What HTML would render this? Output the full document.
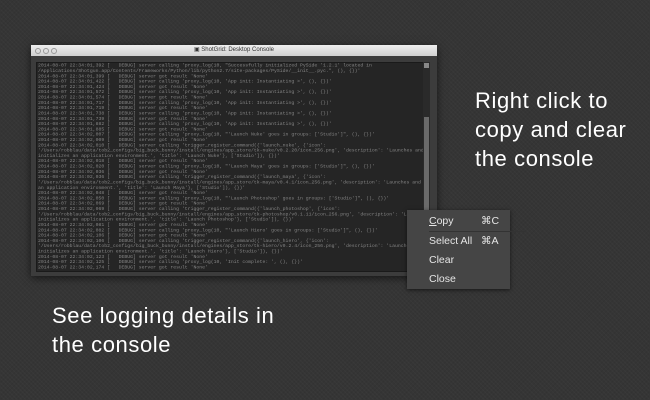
<!DOCTYPE html>
<html><head><meta charset="utf-8"><style>
body{margin:0;width:650px;height:400px;overflow:hidden;background:#353535;font-family:"Liberation Sans",sans-serif;position:relative}
.bg{position:absolute;inset:0;background:repeating-linear-gradient(45deg,rgba(255,255,255,0.02) 0 1px,transparent 1px 3px),repeating-linear-gradient(-45deg,rgba(0,0,0,0.05) 0 1px,transparent 1px 3px)}
.win{position:absolute;left:31px;top:45px;width:406px;height:231px;background:#3c3c3c;box-shadow:0 2px 8px rgba(0,0,0,.6)}
.title{height:11px;background:linear-gradient(#eee,#d0d0d0);font-size:6px;color:#333;text-align:center;line-height:11px;position:relative}
.dots{position:absolute;left:4px;top:3px}
.dots i{display:inline-block;width:4px;height:4px;border:1px solid #999;border-radius:50%;margin-right:2px}
.con{position:absolute;left:5px;top:17px;width:387px;height:208px;background:#252525;overflow:hidden;border:1px solid #1a1a1a}
.con pre{margin:1px 0 0 1px;font-family:"Liberation Mono",monospace;font-size:4.8px;line-height:6px;color:#858585;transform:scale(1,0.885);transform-origin:0 0}
.sb{position:absolute;left:392px;top:17px;width:7px;height:209px;background:#2a2a2a}
.sb .th{position:absolute;left:1px;top:55px;width:5px;height:154px;background:#6a6a6a}
.sb .up{position:absolute;left:1px;top:1px;width:5px;height:5px;background:#888}
.menu{position:absolute;left:407px;top:210px;width:103px;height:79px;background:#454545;box-shadow:0 1px 4px rgba(0,0,0,.6);color:#e6e6e6;font-size:10.5px}
.menu div{position:absolute;left:22px}
.menu span{position:absolute;left:74px}
.sep{position:absolute;left:4px;top:21px;width:96px;height:1px;background:#333}
.txt{position:absolute;color:#fff;font-size:22px;letter-spacing:0.6px;line-height:29px}
</style></head><body><div class="bg"></div>
<div class="win"><div class="title"><span class="dots"><i></i><i></i><i></i></span>▣ ShotGrid: Desktop Console</div>
<div class="con"><pre>2014-08-07 22:34:01,392 [   DEBUG] server calling 'proxy_log(10, "Successfully initialized PySide '1.2.1' located in
/Applications/Shotgun.app/Contents/Frameworks/Python/lib/python2.7/site-packages/PySide/__init__.pyc.", (), {})'
2014-08-07 22:34:01,399 [   DEBUG] server got result 'None'
2014-08-07 22:34:01,422 [   DEBUG] server calling 'proxy_log(10, 'App init: Instantiating >', (), {})'
2014-08-07 22:34:01,424 [   DEBUG] server got result 'None'
2014-08-07 22:34:01,572 [   DEBUG] server calling 'proxy_log(10, 'App init: Instantiating >', (), {})'
2014-08-07 22:34:01,574 [   DEBUG] server got result 'None'
2014-08-07 22:34:01,717 [   DEBUG] server calling 'proxy_log(10, 'App init: Instantiating >', (), {})'
2014-08-07 22:34:01,719 [   DEBUG] server got result 'None'
2014-08-07 22:34:01,738 [   DEBUG] server calling 'proxy_log(10, 'App init: Instantiating >', (), {})'
2014-08-07 22:34:01,739 [   DEBUG] server got result 'None'
2014-08-07 22:34:01,882 [   DEBUG] server calling 'proxy_log(10, 'App init: Instantiating >', (), {})'
2014-08-07 22:34:01,885 [   DEBUG] server got result 'None'
2014-08-07 22:34:02,007 [   DEBUG] server calling 'proxy_log(10, "'Launch Nuke' goes in groups: ['Studio']", (), {})'
2014-08-07 22:34:02,009 [   DEBUG] server got result 'None'
2014-08-07 22:34:02,010 [   DEBUG] server calling 'trigger_register_command({'launch_nuke', {'icon':
'/Users/robblau/data/tob2_configs/big_buck_bunny/install/engines/app_store/tk-nuke/v0.2.20/icon_256.png', 'description': 'Launches and
initializes an application environment.', 'title': 'Launch Nuke'}, ['Studio']), {})'
2014-08-07 22:34:02,018 [   DEBUG] server got result 'None'
2014-08-07 22:34:02,020 [   DEBUG] server calling 'proxy_log(10, "'Launch Maya' goes in groups: ['Studio']", (), {})'
2014-08-07 22:34:02,036 [   DEBUG] server got result 'None'
2014-08-07 22:34:02,036 [   DEBUG] server calling 'trigger_register_command({'launch_maya', {'icon':
'/Users/robblau/data/tob2_configs/big_buck_bunny/install/engines/app_store/tk-maya/v0.4.1/icon_256.png', 'description': 'Launches and initializes
an application environment.', 'title': 'Launch Maya'}, ['Studio']), {})'
2014-08-07 22:34:02,048 [   DEBUG] server got result 'None'
2014-08-07 22:34:02,050 [   DEBUG] server calling 'proxy_log(10, "'Launch Photoshop' goes in groups: ['Studio']", (), {})'
2014-08-07 22:34:02,069 [   DEBUG] server got result 'None'
2014-08-07 22:34:02,069 [   DEBUG] server calling 'trigger_register_command({'launch_photoshop', {'icon':
'/Users/robblau/data/tob2_configs/big_buck_bunny/install/engines/app_store/tk-photoshop/v0.1.11/icon_256.png', 'description': 'Launches and
initializes an application environment.', 'title': 'Launch Photoshop'}, ['Studio']), {})'
2014-08-07 22:34:02,081 [   DEBUG] server got result 'None'
2014-08-07 22:34:02,082 [   DEBUG] server calling 'proxy_log(10, "'Launch Hiero' goes in groups: ['Studio']", (), {})'
2014-08-07 22:34:02,106 [   DEBUG] server got result 'None'
2014-08-07 22:34:02,106 [   DEBUG] server calling 'trigger_register_command({'launch_hiero', {'icon':
'/Users/robblau/data/tob2_configs/big_buck_bunny/install/engines/app_store/tk-hiero/v0.2.4/icon_256.png', 'description': 'Launches and
initializes an application environment.', 'title': 'Launch Hiero'}, ['Studio']), {})'
2014-08-07 22:34:02,123 [   DEBUG] server got result 'None'
2014-08-07 22:34:02,125 [   DEBUG] server calling 'proxy_log(10, 'Init complete: ', (), {})'
2014-08-07 22:34:02,174 [   DEBUG] server got result 'None'</pre></div>
<div class="sb"><div class="up"></div><div class="th"></div></div>
</div>
<div class="menu">
<div style="top:5px"><u>C</u>opy</div><span style="top:5px">⌘C</span>
<div class="sep"></div>
<div style="top:25px">Select All</div><span style="top:25px">⌘A</span>
<div style="top:44px">Clear</div>
<div style="top:63px">Close</div>
</div>
<div class="txt" style="left:475px;top:86px">Right click to<br>copy and clear<br>the console</div>
<div class="txt" style="left:52px;top:301px">See logging details in<br>the console</div>
</body></html>
